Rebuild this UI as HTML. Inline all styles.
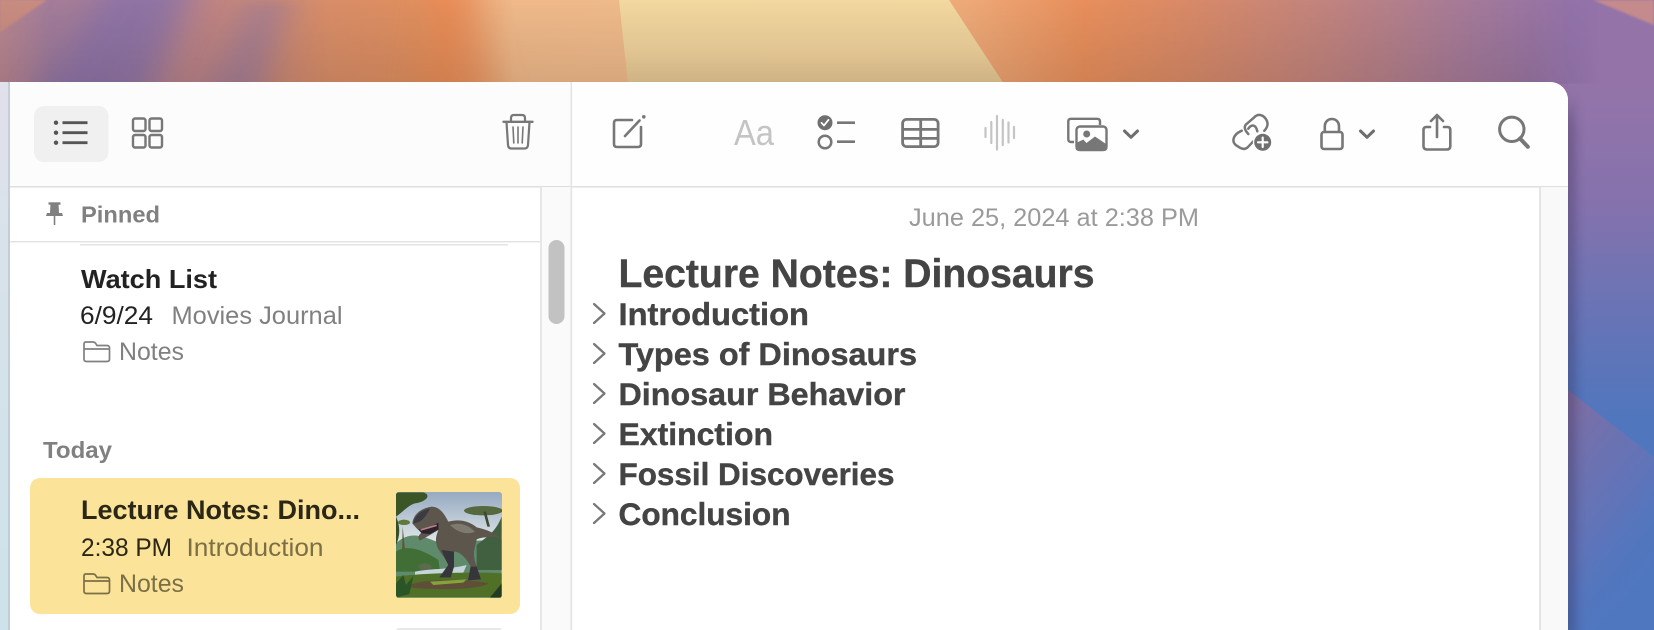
<!DOCTYPE html>
<html><head><meta charset="utf-8"><title>Notes</title>
<style>html,body{margin:0;padding:0;background:#fff;width:1654px;height:630px;overflow:hidden}svg{display:block}text{font-family:"Liberation Sans",sans-serif}</style></head>
<body>
<svg width="1654" height="630" viewBox="0 0 1654 630" xmlns="http://www.w3.org/2000/svg">
<defs>
<linearGradient id="wall" x1="0" y1="0" x2="1" y2="0">
<stop offset="0" stop-color="#b88690"/><stop offset=".03" stop-color="#a37d9a"/><stop offset=".12" stop-color="#bd8486"/><stop offset=".16" stop-color="#c98876"/><stop offset=".2" stop-color="#d98e68"/><stop offset=".255" stop-color="#e08f5e"/><stop offset=".27" stop-color="#e88d58"/><stop offset=".29" stop-color="#eba878"/><stop offset=".31" stop-color="#efb98a"/><stop offset=".375" stop-color="#efba8a"/>
<stop offset=".58" stop-color="#eeab7a"/><stop offset=".655" stop-color="#e88f5c"/><stop offset=".72" stop-color="#d88a68"/><stop offset=".8" stop-color="#c2847e"/><stop offset=".89" stop-color="#a47a9a"/><stop offset=".95" stop-color="#9272a8"/><stop offset="1" stop-color="#9474a8"/>
</linearGradient>
<linearGradient id="ctr" x1="0" y1="0" x2="0" y2="1"><stop offset="0" stop-color="#f3d8a0"/><stop offset=".6" stop-color="#f0d29c"/><stop offset="1" stop-color="#e4c693"/></linearGradient>
<linearGradient id="dark" x1="0" y1="0" x2="0" y2="1"><stop offset="0" stop-color="#000" stop-opacity="0"/><stop offset="1" stop-color="#000" stop-opacity=".1"/></linearGradient>
<linearGradient id="fadeX" gradientUnits="userSpaceOnUse" x1="1530" y1="0" x2="1600" y2="0"><stop offset="0" stop-color="#fff"/><stop offset="1" stop-color="#000"/></linearGradient>
<mask id="darkMask" maskUnits="userSpaceOnUse" x="0" y="0" width="1654" height="100"><rect width="1654" height="100" fill="url(#fadeX)"/></mask>
<linearGradient id="rs" x1="0" y1="0" x2="0" y2="1"><stop offset="0" stop-color="#9474a8"/><stop offset=".22" stop-color="#8572ad"/><stop offset=".42" stop-color="#6874b6"/><stop offset=".62" stop-color="#5076bd"/><stop offset="1" stop-color="#4f77c0"/></linearGradient>
<linearGradient id="rs2" x1="0" y1="0" x2=".45" y2="1"><stop offset="0" stop-color="#8a6c9c" stop-opacity=".85"/><stop offset=".6" stop-color="#6f72b4" stop-opacity=".55"/><stop offset="1" stop-color="#5076bd" stop-opacity="0"/></linearGradient>
<linearGradient id="lft" x1="0" y1="0" x2="0" y2="1"><stop offset="0" stop-color="#e2e0ea"/><stop offset=".3" stop-color="#d8e2ea"/><stop offset="1" stop-color="#cde2ea"/></linearGradient>
<linearGradient id="sky" x1="0" y1="0" x2="0" y2="1"><stop offset="0" stop-color="#95a9c0"/><stop offset=".5" stop-color="#e4eaea"/><stop offset="1" stop-color="#c8d8d0"/></linearGradient>
<clipPath id="win"><path d="M10 82H1550a18 18 0 0 1 18 18V630H10Z"/></clipPath>
<clipPath id="th"><rect x="396" y="492" width="106" height="106" rx="3"/></clipPath>
<clipPath id="th2"><rect x="396" y="628" width="106" height="6" rx="3"/></clipPath>
<clipPath id="top"><rect width="1654" height="84"/></clipPath>
<filter id="b8" x="-60%" y="-40%" width="220%" height="180%"><feGaussianBlur stdDeviation="18 6"/></filter>
<filter id="b1" x="-10%" y="-10%" width="120%" height="120%"><feGaussianBlur stdDeviation="1"/></filter>
<filter id="bs" x="-100%" y="-10%" width="300%" height="120%"><feGaussianBlur stdDeviation="5 12"/></filter>
<filter id="bt" x="0" y="0" width="100%" height="100%"><feGaussianBlur stdDeviation=".35"/></filter>
</defs>

<!-- wallpaper -->
<rect width="1654" height="630" fill="url(#wall)"/>
<g clip-path="url(#top)">
<polygon points="110,-30 200,-30 145,100 35,100" fill="#8a72a8" filter="url(#b8)" opacity=".85"/>
<polygon points="255,0 285,0 255,100 205,100" fill="#9a7a9c" filter="url(#b8)" opacity=".8"/>
<polygon points="438,-20 464,-20 496,100 422,100" fill="#e88d58" filter="url(#b8)" opacity=".7"/>
</g>
<polygon points="0,0 47,0 0,32" fill="#c98c80" filter="url(#b1)"/>
<polygon points="1593,0 1654,0 1654,25" fill="#c48a8c" filter="url(#b1)"/>
<polygon points="619,0 949,0 1004,84 628,84" fill="url(#ctr)"/>
<rect x="1568" y="82" width="86" height="548" fill="url(#rs)"/>
<polygon points="1568,390 1654,457 1654,630 1568,630" fill="url(#rs2)"/>
<rect y="0" width="1654" height="84" fill="url(#dark)" mask="url(#darkMask)"/>
<rect x="1556" y="110" width="20" height="540" fill="#201838" opacity=".26" filter="url(#bs)"/>
<rect x="0" y="82" width="10" height="548" fill="url(#lft)"/>
<rect x="8" y="82" width="2" height="548" fill="#b4c0cc" opacity=".6"/>

<!-- window -->
<g clip-path="url(#win)">
<rect x="10" y="82" width="1558" height="548" fill="#fff"/>
<rect x="10" y="82" width="561" height="105" fill="#fcfcfc"/>
<rect x="571" y="82" width="997" height="105" fill="#fefefe"/>
<rect x="10" y="186" width="1558" height="1.5" fill="#dedede"/>
<rect x="541" y="187" width="30" height="443" fill="#fafafa"/>
<rect x="540" y="187" width="2" height="443" fill="#e6e6e6"/>
<rect x="570.5" y="82" width="1.6" height="548" fill="#e3e3e3"/>
<rect x="1541" y="187" width="27" height="443" fill="#f9f9f9"/>
<rect x="1539" y="187" width="2" height="443" fill="#e5e5e5"/>
</g>

<!-- sidebar toolbar -->
<rect x="34" y="106" width="74.500" height="56" rx="10" fill="#f0f0f0"/>
<g fill="#555"><circle cx="56" cy="122.700" r="2.200"/><circle cx="56" cy="132.700" r="2.200"/><circle cx="56" cy="142.700" r="2.200"/></g>
<path d="M62.500 122.700H87.500M62.500 132.700H87.500M62.500 142.700H87.500" stroke="#555" stroke-width="2.800" fill="none"/>
<g fill="none" stroke="#777" stroke-width="2.400">
<rect x="133" y="118.500" width="12.500" height="12.500" rx="2"/><rect x="149.500" y="118.500" width="12.500" height="12.500" rx="2"/>
<rect x="133" y="135" width="12.500" height="12.500" rx="2"/><rect x="149.500" y="135" width="12.500" height="12.500" rx="2"/>
</g>
<g fill="none" stroke="#777" stroke-width="2.200" stroke-linecap="round">
<path d="M503.500 121.800H532.500" stroke-width="2.400"/>
<path d="M511 121V118Q511 115 514 115H522Q525 115 525 118V121"/>
<path d="M506.500 122L508 145Q508.300 148.500 511.500 148.500H524.500Q527.700 148.500 528 145L529.500 122"/>
<path d="M513 127L513.800 143M518 127V143M523 127L522.200 143" stroke-width="1.600"/>
</g>

<!-- editor toolbar -->
<g fill="none" stroke="#777" stroke-width="2.600" stroke-linecap="round" stroke-linejoin="round">
<path d="M632 120H617Q614 120 614 123V144Q614 147 617 147H638Q641 147 641 144V127"/>
<path d="M625 136L639.500 120.500"/>
</g>
<circle cx="643.800" cy="116.800" r="1.800" fill="#777"/>
<text x="734" y="145" font-size="36" fill="#c4c4c4" textLength="40" lengthAdjust="spacingAndGlyphs">Aa</text>
<circle cx="825" cy="122.700" r="7.500" fill="#6f6f6f"/>
<path d="M821.500 122.800L824 125.500L828.500 119.800" fill="none" stroke="#fff" stroke-width="1.800" stroke-linecap="round" stroke-linejoin="round"/>
<circle cx="825" cy="142" r="6.300" fill="none" stroke="#777" stroke-width="2.500"/>
<path d="M837 122.700H855M837 141.700H855" stroke="#777" stroke-width="2.600" fill="none"/>
<g fill="none" stroke="#777" stroke-width="2.800">
<rect x="902.600" y="119.400" width="35.500" height="27.200" rx="4"/>
<path d="M902.600 129.400H938M902.600 138.400H938M920.700 119.400V146.600"/>
</g>
<g stroke="#c4c4c4" stroke-width="2.200" stroke-linecap="round" fill="none">
<path d="M985.500 128V137M991.300 122V143M997 116V149.500M1002.800 120V145M1008.500 122.500V142.500M1014 127V138"/>
</g>
<g>
<path d="M1074 142H1071Q1068.300 142 1068.300 139V121.500Q1068.300 118.800 1071 118.800H1097Q1100 118.800 1100 121.500V125" fill="none" stroke="#777" stroke-width="2.400"/>
<rect x="1076.500" y="126.500" width="30" height="23.500" rx="3.500" fill="#fff" stroke="#777" stroke-width="2.400"/>
<circle cx="1086.700" cy="134" r="3.500" fill="#777"/>
<path d="M1075.500 143.300L1083.300 139.500L1086.500 143L1095 136.500L1107.500 145V147.500Q1107.500 151 1104 151H1079Q1075.500 151 1075.500 147.500Z" fill="#777"/>
</g>
<path d="M1124.500 131L1131 137.300L1137.500 131" fill="none" stroke="#6e6e6e" stroke-width="3" stroke-linecap="round" stroke-linejoin="round"/>
<!-- link -->
<g fill="none" stroke="#777" stroke-width="2.500" stroke-linecap="round">
<path d="M1248.300 134C1244.500 130 1244 127 1245.700 124.700L1254.300 117.300C1258 113.500 1262.500 114.500 1265.700 118.700C1268.500 122.500 1268 127 1264.300 130.700"/>
<path d="M1241.700 130.700C1232 135 1231 143 1237.700 146.300C1242 149.500 1245.500 149.500 1247.700 147.300L1253.300 141.300"/>
<path d="M1248.300 128.700C1252 123.500 1256 125 1257.300 131.300"/>
</g>
<circle cx="1262.700" cy="142.300" r="9.800" fill="#fff"/>
<circle cx="1262.700" cy="142.300" r="8.500" fill="#6f6f6f"/>
<path d="M1262.700 137.600V147M1258 142.300H1267.400" stroke="#fff" stroke-width="2.200" stroke-linecap="round"/>
<!-- lock -->
<g fill="none" stroke="#777" stroke-width="2.600">
<rect x="1321.500" y="132" width="21" height="17" rx="2.500"/>
<path d="M1324.800 131V126.500C1324.800 116.500 1339 116.500 1339 126.500V131"/>
</g>
<path d="M1360.500 131L1367 137.300L1373.500 131" fill="none" stroke="#6e6e6e" stroke-width="3" stroke-linecap="round" stroke-linejoin="round"/>
<!-- share -->
<g fill="none" stroke="#777" stroke-width="2.600" stroke-linecap="round" stroke-linejoin="round">
<path d="M1430 127H1426.500Q1423.500 127 1423.500 130V146Q1423.500 149.500 1427 149.500H1447Q1450.300 149.500 1450.300 146V130Q1450.300 127 1447.300 127H1444"/>
<path d="M1437 137V115.500M1431 121L1437 115L1443 121"/>
</g>
<!-- search -->
<circle cx="1511.800" cy="129.300" r="12.200" fill="none" stroke="#777" stroke-width="3"/>
<path d="M1520 138.500L1527.800 146.800" stroke="#777" stroke-width="4" stroke-linecap="round"/>

<!-- sidebar -->
<path d="M50.500 203H58.500L59 213H62L63 216H46L47 213H50Z" fill="#808080"/>
<path d="M48.500 203.500H60.500" stroke="#808080" stroke-width="2.400"/>
<path d="M54.500 216V225" stroke="#808080" stroke-width="1.600"/>
<text x="81" y="222.700" font-size="23" font-weight="700" fill="#808080" textLength="79" lengthAdjust="spacingAndGlyphs">Pinned</text>
<rect x="10" y="241" width="530" height="1.400" fill="#e2e2e2"/>
<rect x="80" y="244" width="428" height="1.600" fill="#e6e6e6"/>
<text x="81" y="288" font-size="26" font-weight="700" fill="#222" textLength="136" lengthAdjust="spacingAndGlyphs">Watch List</text>
<text x="80" y="324" font-size="25" fill="#222" textLength="73" lengthAdjust="spacingAndGlyphs">6/9/24</text>
<text x="171.500" y="324" font-size="25" fill="#808080" textLength="171" lengthAdjust="spacingAndGlyphs">Movies Journal</text>
<path d="M84 347V344Q84 342 86 342H93Q95 342 96 344L97 345.500H107Q109.500 345.500 109.500 348V359Q109.500 361.500 107 361.500H86.500Q84 361.500 84 359ZM84 349H109.500" fill="none" stroke="#808080" stroke-width="1.700"/>
<text x="119" y="360" font-size="25" fill="#808080" textLength="65" lengthAdjust="spacingAndGlyphs">Notes</text>

<text x="43" y="458" font-size="23" font-weight="700" fill="#808080" textLength="69" lengthAdjust="spacingAndGlyphs">Today</text>
<rect x="30" y="478" width="490" height="136" rx="10" fill="#fbe399"/>
<text x="81" y="519" font-size="26.500" font-weight="700" fill="#2a2716" textLength="279" lengthAdjust="spacingAndGlyphs">Lecture Notes: Dino...</text>
<text x="81" y="556" font-size="25" fill="#2a2716" textLength="91" lengthAdjust="spacingAndGlyphs">2:38 PM</text>
<text x="186.500" y="556" font-size="25" fill="#7b6f45" textLength="137" lengthAdjust="spacingAndGlyphs">Introduction</text>
<path d="M84 579V576Q84 574 86 574H93Q95 574 96 576L97 577.500H107Q109.500 577.500 109.500 580V591Q109.500 593.500 107 593.500H86.500Q84 593.500 84 591ZM84 581H109.500" fill="none" stroke="#7b6f45" stroke-width="1.700"/>
<text x="119" y="592" font-size="25" fill="#7b6f45" textLength="65" lengthAdjust="spacingAndGlyphs">Notes</text>

<!-- thumbnail -->
<g clip-path="url(#th)">
<rect x="396" y="492" width="106" height="106" fill="url(#sky)"/>
<g transform="translate(380 470) scale(.33333)" filter="url(#bt)">
<path d="M48 220C90 180 130 200 170 215L365 210V330H48Z" fill="#5f8a6c"/>
<path d="M290 225C320 200 345 190 365 140V300H290Z" fill="#3f6040"/>
<ellipse cx="310" cy="122" rx="58" ry="14" fill="#56683c"/>
<path d="M310 125L322 170L330 170L318 125Z" fill="#3c4a30"/>
<path d="M48 67H130C155 75 140 95 105 100C85 105 70 125 48 140Z" fill="#3a5426"/>
<path d="M48 140C62 170 60 200 48 225Z" fill="#34502a"/>
<path d="M68 170L76 250H66Z" fill="#5a5a38"/>
<ellipse cx="72" cy="157" rx="18" ry="8" fill="#5f7a38"/>
<path d="M48 245C80 222 130 240 175 270L180 305H48Z" fill="#3f6e34"/>
<path d="M105 305C150 295 200 300 260 285L250 308C200 318 150 320 105 318Z" fill="#c4d6da"/>
<ellipse cx="135" cy="290" rx="20" ry="10" fill="#5c6b50"/>
<path d="M48 320C120 310 270 305 365 310V383H48Z" fill="#4f6f28"/>
<path d="M85 345C150 325 250 325 325 340C300 358 180 362 85 352Z" fill="#5f5038"/>
<path d="M150 335L260 328L250 338L160 345Z" fill="#86a23e"/>
<path d="M48 340L70 315L78 345L100 318L88 372L48 383Z" fill="#2a5426"/>
<path d="M330 383L365 340V383Z" fill="#233d20"/>
<path d="M97 160C100 135 120 115 155 110C180 110 195 135 205 155C240 145 270 155 290 172C320 178 345 190 365 205C335 200 310 200 290 208C285 235 275 250 290 290L303 328L264 331L272 290C260 265 240 245 222 245L222 290L212 322L178 322L205 285C195 260 175 245 170 225C165 205 170 195 175 180L150 195L120 212C112 205 115 195 125 188L110 175Z" fill="#5c574e"/>
<path d="M115 178C135 178 155 170 175 158L176 178L150 192L125 190Z" fill="#2f2329"/>
<path d="M122 180L170 166" stroke="#b67f8a" stroke-width="5"/>
<path d="M100 160C102 140 122 120 150 116C140 135 125 160 100 160Z" fill="#3a3b42"/>
<path d="M210 165C240 155 265 165 285 185C265 195 235 190 210 165Z" fill="#7d7a6e"/>
<path d="M222 245L222 290L212 322L178 322L205 285C195 265 190 255 185 240Z" fill="#36343a"/>
<path d="M272 290L264 331L303 328L290 290Z" fill="#36343a"/>
</g>
</g>
<g clip-path="url(#th2)"><rect x="396" y="628" width="106" height="6" fill="#e8e8e8"/></g>

<!-- scrollbar -->
<rect x="548.500" y="240" width="16" height="84" rx="8" fill="#c2c2c2"/>

<!-- note -->
<text x="909" y="226" font-size="25" fill="#9a9a9a" textLength="290" lengthAdjust="spacingAndGlyphs">June 25, 2024 at 2:38 PM</text>
<text x="618.500" y="287" font-size="39.500" font-weight="700" fill="#444" stroke="#444" stroke-width=".4" textLength="476" lengthAdjust="spacingAndGlyphs">Lecture Notes: Dinosaurs</text>
<g font-size="31.500" font-weight="700" fill="#444" stroke="#444" stroke-width=".4">
<text x="618.500" y="325" textLength="190.500" lengthAdjust="spacingAndGlyphs">Introduction</text>
<text x="618.500" y="365" textLength="298.500" lengthAdjust="spacingAndGlyphs">Types of Dinosaurs</text>
<text x="618.500" y="405" textLength="287" lengthAdjust="spacingAndGlyphs">Dinosaur Behavior</text>
<text x="618.500" y="445" textLength="154.500" lengthAdjust="spacingAndGlyphs">Extinction</text>
<text x="618.500" y="485" textLength="276" lengthAdjust="spacingAndGlyphs">Fossil Discoveries</text>
<text x="618.500" y="525" textLength="172" lengthAdjust="spacingAndGlyphs">Conclusion</text>
</g>
<g fill="none" stroke="#777" stroke-width="2.200" stroke-linecap="round" stroke-linejoin="round">
<path d="M594 304L604.500 313.500L594 323"/>
<path d="M594 344L604.500 353.500L594 363"/>
<path d="M594 384L604.500 393.500L594 403"/>
<path d="M594 424L604.500 433.500L594 443"/>
<path d="M594 464L604.500 473.500L594 483"/>
<path d="M594 504L604.500 513.500L594 523"/>
</g>
</svg>
</body></html>
